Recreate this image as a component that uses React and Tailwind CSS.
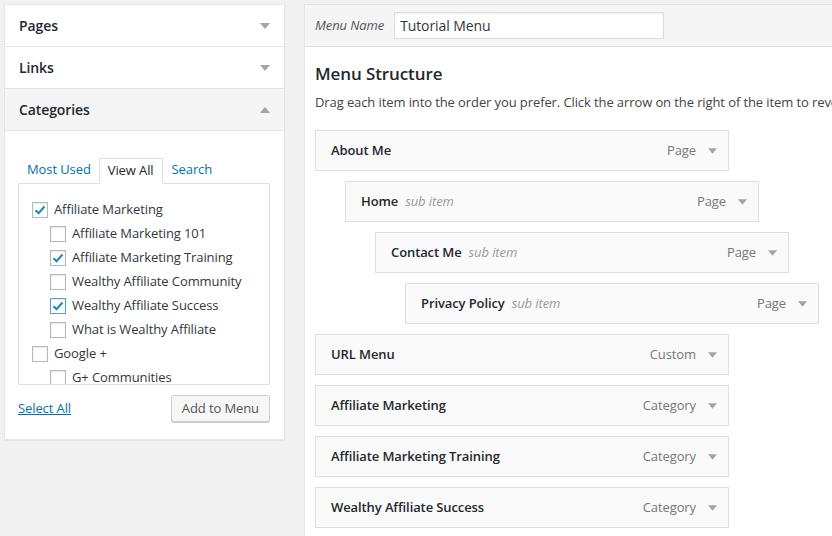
import React from 'react';

const font = { fontFamily: '"Open Sans", "Noto Sans", sans-serif' };

const Arrow = ({ up = false, className = '' }) => (
    <svg width="10" height="6" viewBox="0 0 10 6" className={className}>
        {up ? <path d="M0 6 L5 0 L10 6 Z" fill="currentColor" /> : <path d="M0 0 L10 0 L5 6 Z" fill="currentColor" />}
    </svg>
);

const Checkbox = ({ checked, focus }) => (
    <span
        className={`w-[16px] h-[16px] shrink-0 bg-white border flex items-center justify-center shadow-[inset_0_1px_2px_rgba(0,0,0,0.1)] ${focus ? 'border-[#5b9dd9] shadow-[0_0_2px_rgba(30,140,190,0.8)]' : 'border-[#b4b9be]'}`}
    >
        {checked && (
            <svg width="14" height="14" viewBox="0 0 14 14">
                <path d="M2.5 7.2 L5.6 10.2 L11.5 3.6" fill="none" stroke="#1e8cbe" strokeWidth="2.2" />
            </svg>
        )}
    </span>
);

const categories = [
    { label: 'Affiliate Marketing', level: 0, checked: true },
    { label: 'Affiliate Marketing 101', level: 1 },
    { label: 'Affiliate Marketing Training', level: 1, checked: true },
    { label: 'Wealthy Affiliate Community', level: 1 },
    { label: 'Wealthy Affiliate Success', level: 1, checked: true, focus: true },
    { label: 'What is Wealthy Affiliate', level: 1 },
    { label: 'Google +', level: 0 },
    { label: 'G+ Communities', level: 1 },
];

const menuItems = [
    { title: 'About Me', type: 'Page', depth: 0 },
    { title: 'Home', type: 'Page', depth: 1, sub: true },
    { title: 'Contact Me', type: 'Page', depth: 2, sub: true },
    { title: 'Privacy Policy', type: 'Page', depth: 3, sub: true },
    { title: 'URL Menu', type: 'Custom', depth: 0 },
    { title: 'Affiliate Marketing', type: 'Category', depth: 0 },
    { title: 'Affiliate Marketing Training', type: 'Category', depth: 0 },
    { title: 'Wealthy Affiliate Success', type: 'Category', depth: 0 },
];

const indent = ['ml-0', 'ml-[30px]', 'ml-[60px]', 'ml-[90px]'];

const SideHeader = ({ title, open }) => (
    <div className={`h-[42px] flex items-center justify-between pl-[14px] pr-[14px] border-b border-[#e5e5e5] ${open ? 'bg-[#f5f5f5]' : 'bg-white'}`}>
        <span className="text-[14px] font-semibold text-[#23282d]">{title}</span>
        <Arrow up={open} className="text-[#a0a5aa]" />
    </div>
);

const App = () => {
    return (
        <div className="w-[832px] h-[536px] overflow-hidden bg-[#f1f1f1] flex items-start gap-[19px] pl-[4px] pt-[4px] tracking-[-0.1px]" style={font}>
            {/* Left: meta boxes */}
            <div className="w-[281px] shrink-0 bg-white border border-[#e5e5e5] shadow-[0_1px_1px_rgba(0,0,0,0.04)]">
                <SideHeader title="Pages" />
                <SideHeader title="Links" />
                <SideHeader title="Categories" open />
                <div className="pt-[26px] pl-[13px] pr-[14px] pb-[17px]">
                    <div className="flex items-end pl-[1px] text-[13px]">
                        <span className="px-[8px] h-[26px] flex items-center text-[#0073aa]">Most Used</span>
                        <span className="px-[8px] h-[26px] flex items-center text-[#23282d] bg-white border border-[#dfdfdf] border-b-white -mb-px relative z-10">View All</span>
                        <span className="px-[9px] h-[26px] flex items-center text-[#0073aa]">Search</span>
                    </div>
                    <div className="h-[202px] overflow-hidden border border-[#dfdfdf] bg-white pt-[14px] pl-[13px]">
                        {categories.map((c) => (
                            <div key={c.label} className={`h-[24px] flex items-center gap-[6px] text-[13px] text-[#32373c] ${c.level ? 'pl-[18px]' : ''}`}>
                                <Checkbox checked={c.checked} focus={c.focus} />
                                <span>{c.label}</span>
                            </div>
                        ))}
                    </div>
                    <div className="flex items-center justify-between mt-[10px]">
                        <a className="text-[13px] text-[#0073aa] underline">Select All</a>
                        <button className="h-[27px] px-[10px] text-[13px] text-[#555] bg-[#f7f7f7] border border-[#cccccc] rounded-[3px] shadow-[0_1px_0_#cccccc]">
                            Add to Menu
                        </button>
                    </div>
                </div>
            </div>

            {/* Right: menu editor */}
            <div className="w-[560px] shrink-0 h-[600px] bg-white border border-[#e5e5e5]">
                <div className="h-[42px] flex items-center gap-[10px] pl-[10px] bg-[#f5f5f5] border-b border-[#dfdfdf]">
                    <span className="text-[13px] italic text-[#555]">Menu Name</span>
                    <div className="w-[270px] h-[27px] bg-white border border-[#dddddd] flex items-center px-[5px] text-[14px] text-[#32373c] shadow-[inset_0_1px_2px_rgba(0,0,0,0.07)]">
                        Tutorial Menu
                    </div>
                </div>
                <div className="pl-[10px] pt-[15px]">
                    <h3 className="text-[17px] leading-[24px] font-semibold text-[#23282d]">Menu Structure</h3>
                    <p className="mt-[6px] text-[13px] leading-[20px] text-[#444] whitespace-nowrap">
                        Drag each item into the order you prefer. Click the arrow on the right of the item to reveal additional configuration options.
                    </p>
                    <div className="mt-[18px] flex flex-col gap-[10px]">
                        {menuItems.map((m) => (
                            <div
                                key={m.title + m.depth}
                                className={`w-[414px] h-[41px] flex items-center justify-between pl-[15px] pr-[11px] bg-[#fafafa] border border-[#dfdfdf] ${indent[m.depth]}`}
                            >
                                <div className="flex items-center gap-[7px]">
                                    <span className="text-[13px] font-semibold text-[#23282d]">{m.title}</span>
                                    {m.sub && <span className="text-[13px] italic text-[#999]">sub item</span>}
                                </div>
                                <div className="flex items-center gap-[12px]">
                                    <span className="text-[13px] text-[#777]">{m.type}</span>
                                    <Arrow className="text-[#a0a5aa] w-[9px]" />
                                </div>
                            </div>
                        ))}
                    </div>
                </div>
            </div>
        </div>
    );
};

export default App;
